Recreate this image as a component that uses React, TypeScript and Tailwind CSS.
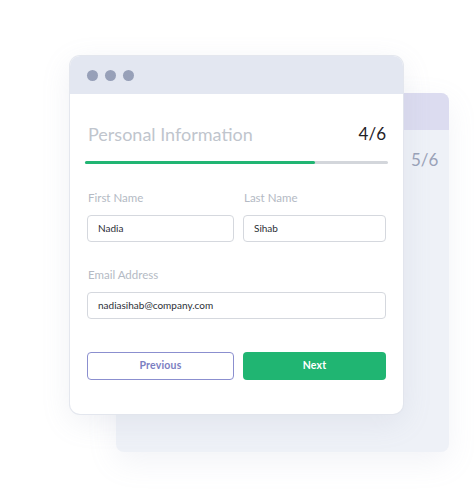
import React from 'react';

const font = { fontFamily: 'Lato, "Open Sans", sans-serif' };

function Field({ label, value, className = '' }: { label: string; value: string; className?: string }) {
  return (
    <div className={className}>
      <div className="h-4 text-[11.5px] leading-4 text-[#b4bac4] pl-[1px]">{label}</div>
      <div className="mt-[9px] h-[27px] rounded-[4px] border border-[#d5d8de] bg-white px-[10px] flex items-center text-[10px] text-[#2c2f36]">
        {value}
      </div>
    </div>
  );
}

export default function App() {
  return (
    <div className="w-[474px] h-[499px] bg-white overflow-hidden" style={font}>
      <div className="relative ml-[70px] pt-[56px]">
        {/* back card, step 5 */}
        <div className="absolute left-[46px] top-[93px] w-[333px] h-[359px] rounded-[8px] bg-[#eef1f7] overflow-hidden shadow-[0_10px_30px_rgba(150,160,190,0.12)]">
          <div className="h-[37px] bg-[#dcdcf0]" />
          <div className="pl-[295px] pt-[20px] text-[17px] leading-5 text-[#9aa2b8]">5/6</div>
        </div>

        {/* front card, step 4 */}
        <div className="relative w-[333px] h-[358px] rounded-[10px] bg-white overflow-hidden shadow-[0_0_0_1px_rgba(225,228,236,0.9),0_8px_30px_rgba(140,150,180,0.14)]">
          <div className="h-[38px] bg-[#e3e7f1] flex items-center gap-[7px] pl-[17px]">
            <span className="block w-[11px] h-[11px] rounded-full bg-[#97a0b8]" />
            <span className="block w-[11px] h-[11px] rounded-full bg-[#97a0b8]" />
            <span className="block w-[11px] h-[11px] rounded-full bg-[#97a0b8]" />
          </div>
          <div className="pl-[17px] pr-[17px]">
            <div className="mt-[30px] flex items-center justify-between h-5">
              <span className="text-[18px] leading-5 text-[#c0c5cd] pl-[1px]">Personal Information</span>
              <span className="text-[17px] leading-5 text-[#1f2126]">4/6</span>
            </div>
            <div className="mt-[17px] h-[3px] rounded-full bg-[#d3d6db] -ml-[2px] -mr-[2px]">
              <div className="h-full w-[76%] rounded-full bg-[#21b573]" />
            </div>
            <div className="mt-[26px] grid grid-cols-[147px_1fr] gap-[9px]">
              <Field label="First Name" value="Nadia" />
              <Field label="Last Name" value="Sihab" />
            </div>
            <Field className="mt-[25px]" label="Email Address" value="nadiasihab@company.com" />
            <div className="mt-[33px] grid grid-cols-[147px_1fr] gap-[9px]">
              <button className="h-[28px] rounded-[4px] border border-[#8b8fcf] bg-white text-[10.5px] font-bold tracking-[0.02em] text-[#7b80c2]">
                Previous
              </button>
              <button className="h-[28px] rounded-[4px] bg-[#20b572] text-[10.5px] font-bold tracking-[0.02em] text-white">
                Next
              </button>
            </div>
          </div>
        </div>
      </div>
    </div>
  );
}
